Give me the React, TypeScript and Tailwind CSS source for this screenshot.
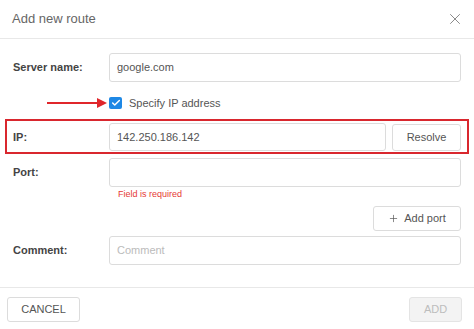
import { X, Plus, Check } from 'lucide-react'

export default function App() {
  const font = { fontFamily: '"Liberation Sans", Arial, sans-serif' }

  return (
    <div className="w-[474px] h-[329px] bg-white text-[11px] text-[#444]" style={font}>
      {/* header */}
      <div className="h-[39px] flex items-center justify-between pl-[12px] pr-[10px] border-b border-[#e8e8e8]">
        <span className="text-[13px] text-[#666]">Add new route</span>
        <X className="w-[18px] h-[18px] text-[#888]" strokeWidth={1.3} />
      </div>

      {/* body */}
      <div className="px-[5px] pt-[14px] pb-[22px] border-b border-[#e8e8e8]">
        <div className="flex items-center px-[8px]">
          <div className="w-[96px] font-bold">Server name:</div>
          <div className="flex-1 h-[29px] border border-[#dcdcdc] rounded-[3px] flex items-center px-[7px] text-[#555]">
            google.com
          </div>
        </div>

        <div className="flex items-center px-[8px] mt-[15px] h-[12px]">
          <div className="w-[96px] flex items-center justify-end pr-[2px]">
            <div className="w-[50px] h-[2px] bg-[#e0262b]" />
            <div className="w-0 h-0 border-y-[5px] border-y-transparent border-l-[10px] border-l-[#e0262b]" />
          </div>
          <div className="w-[13px] h-[12px] rounded-[2px] bg-[#1e88e5] flex items-center justify-center">
            <Check className="w-[10px] h-[10px] text-white" strokeWidth={3.5} />
          </div>
          <span className="ml-[7px] text-[#555]">Specify IP address</span>
        </div>

        <div className="mt-[10px] border-2 border-[#d9272e] px-[6px] pt-[2px] pb-[1px] flex items-center">
          <div className="w-[96px] font-bold">IP:</div>
          <div className="flex-1 h-[28px] border border-[#dcdcdc] rounded-[3px] flex items-center px-[7px] text-[#555]">
            142.250.186.142
          </div>
          <button className="ml-[6px] w-[69px] h-[27px] border border-[#dcdcdc] rounded-[3px] text-[#555]">
            Resolve
          </button>
        </div>

        <div className="flex items-center px-[8px] mt-[4px]">
          <div className="w-[96px] font-bold">Port:</div>
          <div className="flex-1 h-[29px] border border-[#dcdcdc] rounded-[3px]" />
        </div>
        <div className="pl-[113px] mt-[2px] text-[9px] leading-[11px] text-[#e53935]">Field is required</div>

        <div className="flex justify-end px-[8px] mt-[6px]">
          <button className="w-[88px] h-[25px] border border-[#dcdcdc] rounded-[3px] flex items-center justify-center gap-[5px] text-[#555]">
            <Plus className="w-[11px] h-[11px]" strokeWidth={1.5} />
            Add port
          </button>
        </div>

        <div className="flex items-center px-[8px] mt-[5px]">
          <div className="w-[96px] font-bold">Comment:</div>
          <div className="flex-1 h-[29px] border border-[#dcdcdc] rounded-[3px] flex items-center px-[7px] text-[#bbb]">
            Comment
          </div>
        </div>
      </div>

      {/* footer */}
      <div className="flex items-center justify-between pl-[7px] pr-[12px] pt-[9px]">
        <button className="w-[73px] h-[25px] border border-[#dcdcdc] rounded-[3px] text-[#555]">CANCEL</button>
        <button className="w-[53px] h-[25px] border border-[#e4e4e4] rounded-[3px] bg-[#f3f3f3] text-[#bdbdbd]">ADD</button>
      </div>
    </div>
  )
}
